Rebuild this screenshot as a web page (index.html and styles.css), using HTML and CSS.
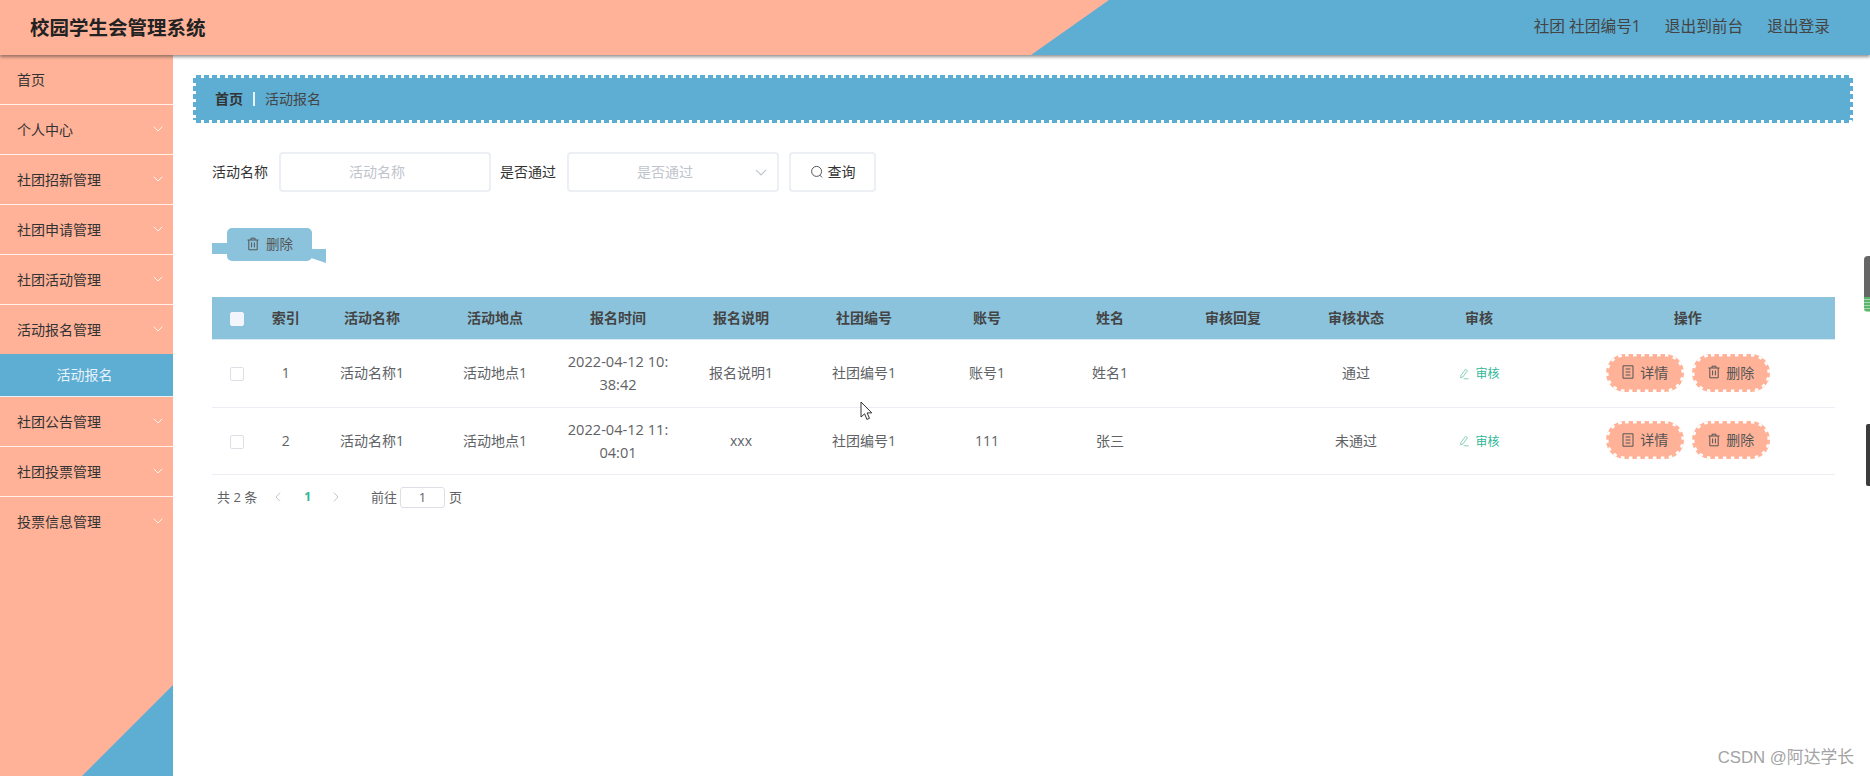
FILE: index.html
```html
<!DOCTYPE html>
<html lang="zh-CN">
<head>
<meta charset="utf-8">
<title>校园学生会管理系统</title>
<link rel="stylesheet" href="styles.css">
</head>
<body>
<svg class="sprite" width="0" height="0" aria-hidden="true">
  <symbol id="i-trash" viewBox="0 0 14 14"><path d="M1.5 3h11M5 3V1.2h4V3M2.8 3v9.8h8.4V3M5.6 5.5v4.8M8.4 5.5v4.8" fill="none" stroke="currentColor" stroke-width="1"/></symbol>
  <symbol id="i-doc" viewBox="0 0 14 14"><path d="M2 .8h10v12.4H2zM4.6 4h4.8M4.6 7h4.8M4.6 10h4.8" fill="none" stroke="currentColor" stroke-width="1"/></symbol>
  <symbol id="i-edit" viewBox="0 0 14 14"><path d="M8.8 1.5l2.2 1.6-5.2 7.2-2.7 1.2.4-2.9zM6.5 12.6h6" fill="none" stroke="currentColor" stroke-width="1"/></symbol>
  <symbol id="i-search" viewBox="0 0 14 14"><circle cx="6.6" cy="6.4" r="5" fill="none" stroke="currentColor" stroke-width="1"/><path d="M10 10.2l2 2.2" fill="none" stroke="currentColor" stroke-width="1"/></symbol>
  <symbol id="i-down" viewBox="0 0 10 6"><path d="M.7.7L5 5 9.3.7" fill="none" stroke="currentColor" stroke-width="1"/></symbol>
  <symbol id="i-left" viewBox="0 0 6 10"><path d="M5 .7L1 5l4 4.3" fill="none" stroke="currentColor" stroke-width="1"/></symbol>
  <symbol id="i-right" viewBox="0 0 6 10"><path d="M1 .7L5 5 1 9.3" fill="none" stroke="currentColor" stroke-width="1"/></symbol>
  <symbol id="i-scallop" viewBox="0 0 78 38">
    <rect width="78" height="38" rx="19" fill="#ffb298"/>
    <rect x="1.25" y="1.25" width="75.5" height="35.5" rx="17.75" fill="none" stroke="#fff" stroke-width="2.5" stroke-dasharray="3.5 4.5"/>
  </symbol>
</svg>
<div class="app">
  <header class="topbar">
    <h1 class="brand">校园学生会管理系统</h1>
    <nav class="top-links">
      <span>社团 社团编号1</span>
      <a>退出到前台</a>
      <a>退出登录</a>
    </nav>
  </header>
  <div class="body">
    <aside class="side">
      <ul class="menu">
        <li class="menu-item">首页</li>
        <li class="menu-item">个人中心<svg class="chev"><use href="#i-down"/></svg></li>
        <li class="menu-item">社团招新管理<svg class="chev"><use href="#i-down"/></svg></li>
        <li class="menu-item">社团申请管理<svg class="chev"><use href="#i-down"/></svg></li>
        <li class="menu-item">社团活动管理<svg class="chev"><use href="#i-down"/></svg></li>
        <li class="menu-item menu-item-open">活动报名管理<svg class="chev"><use href="#i-down"/></svg></li>
        <li class="menu-sub">活动报名</li>
        <li class="menu-item">社团公告管理<svg class="chev"><use href="#i-down"/></svg></li>
        <li class="menu-item">社团投票管理<svg class="chev"><use href="#i-down"/></svg></li>
        <li class="menu-item menu-item-last">投票信息管理<svg class="chev"><use href="#i-down"/></svg></li>
      </ul>
    </aside>
    <main class="main">
      <div class="crumb">
        <b class="crumb-home">首页</b>
        <i class="crumb-sep"></i>
        <span>活动报名</span>
      </div>
      <div class="content">
        <form class="filter">
          <label class="filter-label">活动名称</label>
          <input class="field" type="text" placeholder="活动名称">
          <label class="filter-label filter-label-second">是否通过</label>
          <div class="field field-select">
            <span>是否通过</span>
            <svg class="select-chev"><use href="#i-down"/></svg>
          </div>
          <button class="search-btn" type="button"><svg class="ico"><use href="#i-search"/></svg>查询</button>
        </form>
        <div class="toolbar">
          <button class="ribbon-btn" type="button"><svg class="ico"><use href="#i-trash"/></svg>删除</button>
        </div>
        <table class="grid">
          <colgroup>
            <col class="col-check"><col class="col-index">
            <col class="col-data"><col class="col-data"><col class="col-data"><col class="col-data"><col class="col-data">
            <col class="col-data"><col class="col-data"><col class="col-data"><col class="col-data"><col class="col-data">
            <col>
          </colgroup>
          <thead>
            <tr>
              <th><span class="check check-head"></span></th>
              <th>索引</th><th>活动名称</th><th>活动地点</th><th>报名时间</th><th>报名说明</th><th>社团编号</th>
              <th>账号</th><th>姓名</th><th>审核回复</th><th>审核状态</th><th>审核</th><th>操作</th>
            </tr>
          </thead>
          <tbody>
            <tr>
              <td><span class="check"></span></td>
              <td>1</td><td>活动名称1</td><td>活动地点1</td><td class="wrap">2022-04-12 10:38:42</td><td>报名说明1</td><td>社团编号1</td>
              <td>账号1</td><td>姓名1</td><td></td><td>通过</td>
              <td><a class="review"><svg class="ico-small"><use href="#i-edit"/></svg>审核</a></td>
              <td><div class="ops">
                <button class="op-btn" type="button"><svg class="op-bg"><use href="#i-scallop"/></svg><svg class="ico"><use href="#i-doc"/></svg><span class="op-text">详情</span></button>
                <button class="op-btn" type="button"><svg class="op-bg"><use href="#i-scallop"/></svg><svg class="ico"><use href="#i-trash"/></svg><span class="op-text">删除</span></button>
              </div></td>
            </tr>
            <tr>
              <td><span class="check"></span></td>
              <td>2</td><td>活动名称1</td><td>活动地点1</td><td class="wrap">2022-04-12 11:04:01</td><td>xxx</td><td>社团编号1</td>
              <td>111</td><td>张三</td><td></td><td>未通过</td>
              <td><a class="review"><svg class="ico-small"><use href="#i-edit"/></svg>审核</a></td>
              <td><div class="ops">
                <button class="op-btn" type="button"><svg class="op-bg"><use href="#i-scallop"/></svg><svg class="ico"><use href="#i-doc"/></svg><span class="op-text">详情</span></button>
                <button class="op-btn" type="button"><svg class="op-bg"><use href="#i-scallop"/></svg><svg class="ico"><use href="#i-trash"/></svg><span class="op-text">删除</span></button>
              </div></td>
            </tr>
          </tbody>
        </table>
        <div class="pager">
          <span class="pager-total">共 2 条</span>
          <svg class="pager-arrow pager-prev"><use href="#i-left"/></svg>
          <b class="pager-num">1</b>
          <svg class="pager-arrow pager-next"><use href="#i-right"/></svg>
          <span class="pager-goto">前往</span>
          <span class="pager-input">1</span>
          <span>页</span>
        </div>
      </div>
    </main>
  </div>
</div>
<div class="watermark">CSDN @阿达学长</div>
<div class="edge edge-top"></div>
<div class="edge edge-bottom"></div>
<svg class="cursor" viewBox="0 0 13 20"><path d="M1 1v15l3.6-3.2 2.3 5.6 2.6-1.1-2.4-5.4h4.7z" fill="#fff" stroke="#333" stroke-width="1"/></svg>
</body>
</html>
```

FILE: styles.css
```css
* { box-sizing: border-box; }
html, body { margin: 0; height: 100%; overflow: hidden; background: #fff; }
body {
  font-family: "Open Sans", "Noto Sans CJK SC", sans-serif;
  font-size: 14px;
  color: #606266;
  position: relative;
}
.sprite { position: absolute; }
ul { list-style: none; margin: 0; padding: 0; }

.app { display: flex; flex-direction: column; height: 776px; }

.topbar {
  flex: 0 0 55px;
  position: relative;
  z-index: 2;
  display: flex;
  align-items: center;
  justify-content: space-between;
  padding: 0 40px 2px 30px;
  background: #ffb298;
  box-shadow: 0 2px 3px rgba(60, 60, 60, .55);
}
.topbar::before {
  content: "";
  position: absolute;
  inset: 0;
  background: #5eadd2;
  clip-path: polygon(1109px 0, 100% 0, 100% 100%, 1031px 100%);
}
.brand {
  position: relative;
  margin: 0;
  font-size: 19.5px;
  font-weight: 700;
  color: #222;
}
.top-links {
  position: relative;
  display: flex;
  gap: 24px;
  padding-bottom: 3px;
  font-size: 15.7px;
  color: #444;
}

.body { flex: 1; display: flex; min-height: 0; }

.side {
  flex: 0 0 173px;
  position: relative;
  background: #ffb298;
  overflow: hidden;
}
.side::after {
  content: "";
  position: absolute;
  inset: 0;
  background: #5eadd2;
  clip-path: polygon(100% 630px, 100% 100%, 82px 100%);
}
.menu { position: relative; z-index: 1; }
.menu-item {
  height: 50px;
  padding: 0 10px 2px 17px;
  display: flex;
  align-items: center;
  justify-content: space-between;
  color: #333;
  border-bottom: 1px solid rgba(255, 255, 255, .8);
}
.menu-item-open { height: 49px; border-bottom: 0; }
.menu-item-last { border-bottom: 0; }
.menu-sub {
  height: 43px;
  display: flex;
  align-items: center;
  justify-content: center;
  padding: 0 4px 2px 0;
  background: #5eadd2;
  color: #e6f3fa;
  border-bottom: 1px solid rgba(255, 255, 255, .85);
}
.chev { width: 10px; height: 6px; color: #fff2ec; }

.main { flex: 1; min-width: 0; padding: 20px 17px 0 20px; }

.crumb {
  height: 48px;
  display: flex;
  align-items: center;
  padding: 0 0 2px 22px;
  border-radius: 4px;
  color: #444;
  background:
    repeating-linear-gradient(90deg, #fff 0 3px, transparent 3px 8px) 0 0 / 100% 3px no-repeat,
    repeating-linear-gradient(90deg, #fff 0 3px, transparent 3px 8px) 0 100% / 100% 3px no-repeat,
    repeating-linear-gradient(#fff 0 3px, transparent 3px 8px) 0 0 / 3px 100% no-repeat,
    repeating-linear-gradient(#fff 0 3px, transparent 3px 8px) 100% 0 / 3px 100% no-repeat,
    #5eadd2;
}
.crumb-home { color: #333; font-weight: 700; }
.crumb-sep { width: 2px; height: 14px; margin: 2px 10px 0; background: #e8f4fa; }

.content { padding-left: 19px; padding-right: 18px; }

.filter { display: flex; align-items: center; margin-top: 29px; color: #333; }
.filter-label { width: 55px; margin-right: 12px; padding-bottom: 2px; white-space: nowrap; }
.filter-label-second { margin-left: 9px; }
.field {
  width: 212px;
  height: 40px;
  padding: 0 16px 2px 0;
  border: 2px solid #eceff3;
  border-radius: 4px;
  background: #fff;
  font: inherit;
  text-align: center;
  color: #606266;
  outline: 0;
}
.field::placeholder { color: #c0c4cc; opacity: 1; }
.field-select {
  position: relative;
  display: flex;
  align-items: center;
  justify-content: center;
  color: #c0c4cc;
}
.select-chev {
  position: absolute;
  right: 10px;
  top: 15px;
  width: 12px;
  height: 7px;
  color: #c0c4cc;
}
.search-btn {
  width: 87px;
  height: 40px;
  margin-left: 10px;
  padding: 0 0 2px;
  display: flex;
  align-items: center;
  justify-content: center;
  gap: 4px;
  border: 2px solid #eceff3;
  border-radius: 4px;
  background: #fff;
  font: inherit;
  color: #333;
}
.ico { width: 14px; height: 14px; flex: none; }
.search-btn .ico { color: #555; margin-top: 2px; }

.toolbar { margin-top: 36px; padding-left: 15px; height: 33px; }
.ribbon-btn {
  position: relative;
  width: 85px;
  height: 33px;
  padding: 0 0 3px;
  display: flex;
  align-items: center;
  justify-content: center;
  gap: 6px;
  border: 0;
  border-radius: 5px;
  background: #8bc3dd;
  font: inherit;
  font-size: 13.5px;
  color: #555;
}
.ribbon-btn .ico { margin-top: 1px; }
.ribbon-btn::before {
  content: "";
  position: absolute;
  left: -15px;
  top: 15px;
  width: 16px;
  height: 11px;
  background: #8bc3dd;
}
.ribbon-btn::after {
  content: "";
  position: absolute;
  left: 84px;
  top: 21px;
  width: 15px;
  height: 14px;
  background: #8bc3dd;
  clip-path: polygon(0 0, 100% 0, 100% 100%, 0 64%);
}

.grid {
  width: 100%;
  margin-top: 36px;
  border-collapse: collapse;
  table-layout: fixed;
  text-align: center;
}
.col-check { width: 49px; }
.col-index { width: 49.5px; }
.col-data { width: 123px; }
.grid th {
  height: 42px;
  padding: 0 0 1px;
  background: #8bc3dd;
  color: #444;
  font-weight: 700;
  border-bottom: 1px solid #d8e9f2;
}
.grid td {
  height: 67px;
  padding: 0 10px 1px;
  line-height: 23px;
  border-bottom: 1px solid #ebeef5;
  word-break: break-all;
}
.grid tbody tr:first-child td { height: 68px; }
.grid td.wrap { font-size: 14.6px; padding: 0 10px; }
.check {
  display: inline-block;
  width: 14px;
  height: 14px;
  vertical-align: middle;
  background: #fff;
  border: 1px solid #dcdfe6;
  border-radius: 2px;
}
.check-head { background: #f2f6fc; border-color: #f2f6fc; }
.review {
  display: inline-flex;
  align-items: center;
  gap: 5px;
  padding-top: 3px;
  font-size: 12px;
  color: #2fb796;
}
.ico-small { width: 12px; height: 12px; color: #75c8a8; }
.ops { display: flex; justify-content: center; gap: 8px; }
.op-btn {
  position: relative;
  width: 78px;
  height: 38px;
  padding: 0 0 1px;
  display: flex;
  align-items: center;
  justify-content: center;
  gap: 5px;
  border: 0;
  background: transparent;
  font: inherit;
  color: #555;
}
.op-bg { position: absolute; inset: 0; width: 78px; height: 38px; }
.op-btn .ico, .op-text { position: relative; }
.pager {
  display: flex;
  align-items: center;
  height: 21px;
  margin-top: 12px;
  padding-left: 5px;
  font-size: 13px;
  color: #606266;
}
.pager > span, .pager > b { margin-top: -2px; }
.pager-arrow { width: 6px; height: 10px; color: #c0c4cc; }
.pager-prev { margin-left: 18px; }
.pager-num { margin-left: 23px; color: #2fb796; font-size: 12px; }
.pager-next { margin-left: 22px; }
.pager-goto { margin-left: 32px; }
.pager > .pager-input {
  width: 45px;
  height: 21px;
  margin: 0 4px 0 3px;
  border: 1px solid #dcdfe6;
  border-radius: 3px;
  text-align: center;
  line-height: 19px;
}

.watermark {
  position: absolute;
  right: 16px;
  top: 746px;
  font-family: "Liberation Sans", "Noto Sans CJK SC", sans-serif;
  font-size: 16.8px;
  line-height: 24px;
  color: #a3a3a3;
  background: #fff;
}
.edge { position: absolute; right: 0; }
.edge-top {
  top: 256px;
  width: 6px;
  height: 56px;
  border-radius: 4px 0 0 4px;
  background:
    repeating-linear-gradient(#5bb56b 0 2px, #a4d8ae 2px 3px) 0 100% / 100% 15px no-repeat,
    #666;
}
.edge-bottom {
  top: 424px;
  width: 4px;
  height: 62px;
  border-radius: 2px 0 0 2px;
  background: #3c3c3c;
}
.cursor {
  position: absolute;
  left: 860px;
  top: 401px;
  width: 13px;
  height: 20px;
}
```
